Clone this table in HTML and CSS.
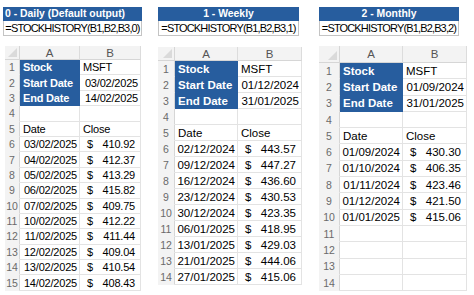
FILE: index.html
```html
<!DOCTYPE html>
<html lang="en">
<head>
<meta charset="utf-8">
<title>STOCKHISTORY examples</title>
<link rel="stylesheet" href="styles.css">
</head>
<body>
<div class="page">

  <section class="panel p1">
    <div class="title left">0 - Daily (Default output)</div>
    <div class="formula">=STOCKHISTORY(B1,B2,B3,0)</div>
    <div class="sheet s1">
      <div class="corner"></div><div class="colh">A</div><div class="colh">B</div>
      <div class="rn">1</div><div class="c lbl">Stock</div><div class="c">MSFT</div>
      <div class="rn">2</div><div class="c lbl">Start Date</div><div class="c num">03/02/2025</div>
      <div class="rn">3</div><div class="c lbl">End Date</div><div class="c num">14/02/2025</div>
      <div class="rn">4</div><div class="c"></div><div class="c"></div>
      <div class="rn">5</div><div class="c">Date</div><div class="c">Close</div>
      <div class="rn">6</div><div class="c num">03/02/2025</div><div class="c acc"><span>$</span><span>410.92</span></div>
      <div class="rn">7</div><div class="c num">04/02/2025</div><div class="c acc"><span>$</span><span>412.37</span></div>
      <div class="rn">8</div><div class="c num">05/02/2025</div><div class="c acc"><span>$</span><span>413.29</span></div>
      <div class="rn">9</div><div class="c num">06/02/2025</div><div class="c acc"><span>$</span><span>415.82</span></div>
      <div class="rn">10</div><div class="c num">07/02/2025</div><div class="c acc"><span>$</span><span>409.75</span></div>
      <div class="rn">11</div><div class="c num">10/02/2025</div><div class="c acc"><span>$</span><span>412.22</span></div>
      <div class="rn">12</div><div class="c num">11/02/2025</div><div class="c acc"><span>$</span><span>411.44</span></div>
      <div class="rn">13</div><div class="c num">12/02/2025</div><div class="c acc"><span>$</span><span>409.04</span></div>
      <div class="rn">14</div><div class="c num">13/02/2025</div><div class="c acc"><span>$</span><span>410.54</span></div>
      <div class="rn">15</div><div class="c num">14/02/2025</div><div class="c acc"><span>$</span><span>408.43</span></div>
    </div>
  </section>

  <section class="panel p2">
    <div class="title">1 - Weekly</div>
    <div class="formula">=STOCKHISTORY(B1,B2,B3,1)</div>
    <div class="sheet s2">
      <div class="corner"></div><div class="colh">A</div><div class="colh">B</div>
      <div class="rn">1</div><div class="c lbl">Stock</div><div class="c">MSFT</div>
      <div class="rn">2</div><div class="c lbl">Start Date</div><div class="c num">01/12/2024</div>
      <div class="rn">3</div><div class="c lbl">End Date</div><div class="c num">31/01/2025</div>
      <div class="rn">4</div><div class="c"></div><div class="c"></div>
      <div class="rn">5</div><div class="c">Date</div><div class="c">Close</div>
      <div class="rn">6</div><div class="c num">02/12/2024</div><div class="c acc"><span>$</span><span>443.57</span></div>
      <div class="rn">7</div><div class="c num">09/12/2024</div><div class="c acc"><span>$</span><span>447.27</span></div>
      <div class="rn">8</div><div class="c num">16/12/2024</div><div class="c acc"><span>$</span><span>436.60</span></div>
      <div class="rn">9</div><div class="c num">23/12/2024</div><div class="c acc"><span>$</span><span>430.53</span></div>
      <div class="rn">10</div><div class="c num">30/12/2024</div><div class="c acc"><span>$</span><span>423.35</span></div>
      <div class="rn">11</div><div class="c num">06/01/2025</div><div class="c acc"><span>$</span><span>418.95</span></div>
      <div class="rn">12</div><div class="c num">13/01/2025</div><div class="c acc"><span>$</span><span>429.03</span></div>
      <div class="rn">13</div><div class="c num">21/01/2025</div><div class="c acc"><span>$</span><span>444.06</span></div>
      <div class="rn">14</div><div class="c num">27/01/2025</div><div class="c acc"><span>$</span><span>415.06</span></div>
    </div>
  </section>

  <section class="panel p3">
    <div class="title">2 - Monthly</div>
    <div class="formula">=STOCKHISTORY(B1,B2,B3,2)</div>
    <div class="sheet s3">
      <div class="corner"></div><div class="colh">A</div><div class="colh">B</div>
      <div class="rn">1</div><div class="c lbl">Stock</div><div class="c">MSFT</div>
      <div class="rn">2</div><div class="c lbl">Start Date</div><div class="c num">01/09/2024</div>
      <div class="rn">3</div><div class="c lbl">End Date</div><div class="c num">31/01/2025</div>
      <div class="rn">4</div><div class="c"></div><div class="c"></div>
      <div class="rn">5</div><div class="c">Date</div><div class="c">Close</div>
      <div class="rn">6</div><div class="c num">01/09/2024</div><div class="c acc"><span>$</span><span>430.30</span></div>
      <div class="rn">7</div><div class="c num">01/10/2024</div><div class="c acc"><span>$</span><span>406.35</span></div>
      <div class="rn">8</div><div class="c num">01/11/2024</div><div class="c acc"><span>$</span><span>423.46</span></div>
      <div class="rn">9</div><div class="c num">01/12/2024</div><div class="c acc"><span>$</span><span>421.50</span></div>
      <div class="rn">10</div><div class="c num">01/01/2025</div><div class="c acc"><span>$</span><span>415.06</span></div>
      <div class="rn">11</div><div class="c"></div><div class="c"></div>
      <div class="rn">12</div><div class="c"></div><div class="c"></div>
      <div class="rn">13</div><div class="c"></div><div class="c"></div>
      <div class="rn">14</div><div class="c"></div><div class="c"></div>
    </div>
  </section>

</div>
</body>
</html>
```

FILE: styles.css
```css
* { box-sizing: border-box; }

html, body {
  margin: 0;
  padding: 0;
  background: #ffffff;
}

body {
  font-family: "Liberation Sans", Arial, sans-serif;
  color: #000000;
  width: 474px;
  height: 295px;
  overflow: hidden;
}

.page {
  display: flex;
  align-items: flex-start;
  padding-top: 7px;
}

.panel {
  display: flex;
  flex-direction: column;
}

.p1 { margin-left: 3px; }
.p2 { margin-left: 16px; }
.p3 { margin-left: 17px; }

.p1 .title, .p1 .formula { width: 139px; }
.p2 .title, .p2 .formula { width: 141px; }
.p3 .title, .p3 .formula { width: 140px; }

.title {
  height: 14px;
  background: #275d9e;
  color: #ffffff;
  font-weight: bold;
  font-size: 10.4px;
  line-height: 14px;
  text-align: center;
  white-space: nowrap;
}

.title.left {
  text-align: left;
  padding-left: 2px;
}

.formula {
  height: 15px;
  border: 1px solid #c4c4c4;
  border-top: none;
  font-size: 11px;
  letter-spacing: -0.85px;
  line-height: 14px;
  text-align: center;
  white-space: nowrap;
}

.sheet {
  display: grid;
  margin-top: 10px;
  background: #ffffff;
  font-size: 11px;
}

.s1 {
  margin-left: 2px;
  grid-template-columns: 15px 60px 61px;
  grid-template-rows: 14px;
  grid-auto-rows: 15.4px;
  letter-spacing: -0.2px;
}

.s2 {
  margin-top: 11px;
  grid-template-columns: 17px 63px 64px;
  grid-template-rows: 14px;
  grid-auto-rows: 16px;
  font-size: 11.5px;
}

.s3 {
  margin-top: 10px;
  grid-template-columns: 21px 63px 64px;
  grid-template-rows: 17px;
  grid-auto-rows: 16.3px;
  font-size: 11.5px;
}

.corner {
  position: relative;
  background: #f3f3f3;
  border-right: 1px solid #d6d6d6;
  border-bottom: 1px solid #d6d6d6;
}

.corner::after {
  content: "";
  position: absolute;
  right: 2px;
  bottom: 2px;
  width: 0;
  height: 0;
  border-left: 9px solid transparent;
  border-bottom: 9px solid #dadada;
}

.colh {
  background: #f3f3f3;
  border-right: 1px solid #dcdcdc;
  border-bottom: 1px solid #d6d6d6;
  color: #555555;
  font-size: 11.5px;
  letter-spacing: 0;
  display: flex;
  align-items: center;
  justify-content: center;
}

.rn {
  background: #f3f3f3;
  border-right: 1px solid #d6d6d6;
  border-bottom: 1px solid #f3f3f3;
  color: #6a6a6a;
  font-size: 10.5px;
  letter-spacing: 0;
  display: flex;
  align-items: center;
  justify-content: center;
}

.c {
  border-right: 1px solid #e3e3e3;
  border-bottom: 1px solid #e3e3e3;
  padding: 0 2px 0 3px;
  display: flex;
  align-items: center;
  white-space: nowrap;
  overflow: hidden;
}

.c.num {
  justify-content: flex-end;
}

.c.lbl {
  background: #275d9e;
  border-color: #275d9e;
  color: #ffffff;
  font-weight: bold;
}

.c.acc {
  justify-content: space-between;
  padding: 0 5px 0 7px;
}
```
